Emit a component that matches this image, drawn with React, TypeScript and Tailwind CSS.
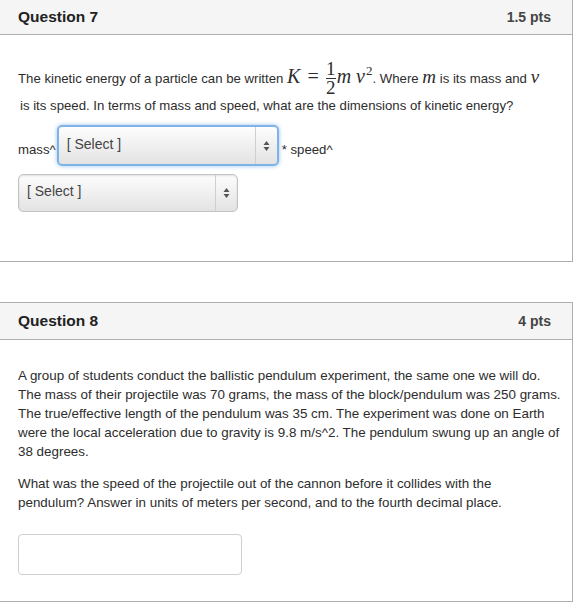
import React from 'react';

const FONT = { fontFamily: '"Liberation Sans", Arial, sans-serif' };

function Arrows() {
  return (
    <svg width="7" height="12" viewBox="0 0 7 12" className="text-[#555]">
      <path d="M3.5 1 L6.5 5 L0.5 5 Z" fill="currentColor" />
      <path d="M3.5 11 L6.5 7 L0.5 7 Z" fill="currentColor" />
    </svg>
  );
}

function FakeSelect({ focused, className }: { focused?: boolean; className: string }) {
  return (
    <div
      className={`relative flex items-stretch rounded-[5px] bg-gradient-to-b from-[#fdfdfd] to-[#e3e3e3] ${
        focused
          ? 'border-2 border-[#7fb2e5] shadow-[0_0_4px_rgba(80,150,230,0.6)]'
          : 'border border-[#c4c4c4] shadow-[inset_0_1px_2px_rgba(0,0,0,0.12)]'
      } ${className}`}
    >
      <div className="flex-1 flex items-center pl-[8px] text-[14px] text-[#444] -mt-[3px]">[ Select ]</div>
      <div className="w-[22px] flex items-center justify-center border-l border-[#cfcfcf]">
        <Arrows />
      </div>
    </div>
  );
}

function Header({ title, pts, h }: { title: string; pts: string; h: string }) {
  return (
    <div className={`${h} flex items-center justify-between bg-[#f5f5f5] border-b border-[#aeaeae] pl-[18px] pr-[21px]`}>
      <h2 className="text-[15.5px] font-bold text-[#222]">{title}</h2>
      <span className="text-[14px] font-bold text-[#444]">{pts}</span>
    </div>
  );
}

const serif = { fontFamily: '"Liberation Serif", "DejaVu Serif", serif' };

const PARA1 = [
  'A group of students conduct the ballistic pendulum experiment, the same one we will do.',
  'The mass of their projectile was 70 grams, the mass of the block/pendulum was 250 grams.',
  'The true/effective length of the pendulum was 35 cm. The experiment was done on Earth',
  'were the local acceleration due to gravity is 9.8 m/s^2. The pendulum swung up an angle of',
  '38 degrees.',
];

const PARA2 = [
  'What was the speed of the projectile out of the cannon before it collides with the',
  'pendulum? Answer in units of meters per second, and to the fourth decimal place.',
];

export default function App() {
  return (
    <div className="w-[573px] bg-white text-[#2d2d2d]" style={FONT}>
      {/* Question 7 */}
      <section className="border-r border-b border-[#aeaeae]">
        <Header title="Question 7" pts="1.5 pts" h="h-[35px]" />
        <div className="h-[226px] px-[18px] pt-[23px]">
          <p className="text-[13.2px] leading-[36px] whitespace-nowrap">
            The kinetic energy of a particle can be written{' '}
            <span className="text-[20px]" style={serif}>
              <i>K</i>
              <span className="mx-[7px]">=</span>
              <span className="inline-block align-middle text-center text-[19px] leading-[16px] mr-[1px]">
                <span className="block">1</span>
                <span className="block w-[10px] border-t border-[#333] my-[1px]" />
                <span className="block">2</span>
              </span>
              <i>m</i>
              <i className="ml-[5px]">v</i>
              <span className="relative -top-[8px] text-[13px] ml-[1px]">2</span>
            </span>
            . Where <i className="text-[19px]" style={serif}>m</i> is its mass and{' '}
            <i className="text-[19px]" style={serif}>v</i>
          </p>
          <p className="text-[13.2px] leading-[18px] pl-[2px]">
            is its speed. In terms of mass and speed, what are the dimensions of kinetic energy?
          </p>
          <div className="flex items-center mt-[10px] text-[13.2px]">
            <span className="mt-[8px]">mass^</span>
            <FakeSelect focused className="w-[222px] h-[41px] ml-[1px]" />
            <span className="ml-[3px] mt-[8px]">* speed^</span>
          </div>
          <FakeSelect className="w-[220px] h-[38px] mt-[8px]" />
        </div>
      </section>

      <div className="h-[40px]" />

      {/* Question 8 */}
      <section className="border-t border-r border-b border-[#aeaeae]">
        <Header title="Question 8" pts="4 pts" h="h-[37px]" />
        <div className="h-[261px] px-[18px] pt-[26px] text-[13.4px] leading-[19px] whitespace-nowrap">
          <p>
            {PARA1.map((l) => (
              <span key={l} className="block">{l}</span>
            ))}
          </p>
          <p className="mt-[13px]">
            {PARA2.map((l) => (
              <span key={l} className="block">{l}</span>
            ))}
          </p>
          <div className="mt-[22px] w-[224px] h-[41px] rounded-[4px] border border-[#cfcfcf]" />
        </div>
      </section>
    </div>
  );
}
